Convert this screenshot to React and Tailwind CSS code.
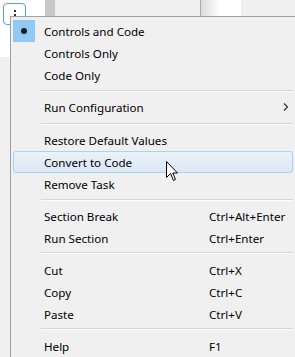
import React from "react";

const font = { fontFamily: '"Noto Sans", "Open Sans", sans-serif' };

function Item({ label, shortcut, checked, hover, submenu }) {
  return (
    <div
      className={`flex h-[22px] items-center rounded-[3px] border ${
        hover ? "border-[#a8d3f1] bg-gradient-to-b from-[#eaf2fa] to-[#dbe8f5]" : "border-transparent"
      }`}
    >
      <div className="flex h-[22px] w-[31px] shrink-0 items-center -ml-px">
        {checked && (
          <div className="flex h-[22px] w-[22px] items-center justify-center bg-[#90c8f6]">
            <div className="h-[6px] w-[6px] rounded-full bg-[#1a1a1a]" />
          </div>
        )}
      </div>
      <div className="w-[165px] shrink-0 whitespace-nowrap pt-px text-[11.6px] leading-[16px] text-black">{label}</div>
      <div className="flex-1 whitespace-nowrap pt-px text-[11.6px] leading-[16px] text-black">{shortcut}</div>
      {submenu && (
        <svg width="6" height="8" viewBox="0 0 6 8" className="mr-[3px]">
          <path d="M1 0.5 L4.5 4 L1 7.5" fill="none" stroke="#333" strokeWidth="1.2" />
        </svg>
      )}
    </div>
  );
}

function Sep({ h = 10, off = 4 }) {
  return (
    <div className="pl-[28px]" style={{ height: h, paddingTop: off }}>
      <div className="h-px bg-[#d7d7d7]" />
      <div className="h-px bg-white/70" />
    </div>
  );
}

export default function App() {
  return (
    <div className="relative h-[357px] w-[295px] overflow-hidden bg-[#f0f0f0]" style={font}>
      {/* background */}
      <div className="flex h-[17px]">
        <div className="w-[45px] bg-white" />
        <div className="w-[10px] bg-[#c8c8c8]" />
        <div className="w-[146px] bg-[#f0f0f0] border-r border-[#a8a8a8]" />
        <div className="flex-1 bg-gradient-to-r from-[#dcdcdc] via-white to-white" style={{ backgroundSize: "40px 100%", backgroundRepeat: "no-repeat" }} />
      </div>
      <div className="h-[40px] w-[10px] bg-white" />

      {/* kebab button */}
      <div className="absolute left-[3px] top-[3px] flex h-[22px] w-[23px] items-start justify-center rounded-[4px] border border-[#5c9ee0] bg-white">
        <div className="mt-[6px] flex flex-col gap-[2px]">
          <div className="h-[2px] w-[2px] bg-[#333]" />
          <div className="h-[2px] w-[2px] bg-[#333]" />
        </div>
      </div>

      {/* menu */}
      <div className="absolute left-[10px] top-[16px] right-0 bottom-[-10px] border-l border-t border-[#a0a0a0] bg-[#f0f0f0] pl-[2px] pr-[2px] pt-[3px]">
        <Item label="Controls and Code" checked />
        <Item label="Controls Only" />
        <Item label="Code Only" />
        <Sep h={10} off={4} />
        <Item label="Run Configuration" submenu />
        <Sep h={11} off={5} />
        <Item label="Restore Default Values" />
        <Item label="Convert to Code" hover />
        <Item label="Remove Task" />
        <Sep h={10} off={4} />
        <Item label="Section Break" shortcut="Ctrl+Alt+Enter" />
        <Item label="Run Section" shortcut="Ctrl+Enter" />
        <Sep h={10} off={3} />
        <Item label="Cut" shortcut="Ctrl+X" />
        <Item label="Copy" shortcut="Ctrl+C" />
        <Item label="Paste" shortcut="Ctrl+V" />
        <Sep h={10} off={3} />
        <Item label="Help" shortcut="F1" />
      </div>

      {/* cursor */}
      <svg className="absolute left-[166px] top-[161px]" width="13" height="21" viewBox="0 0 13 21">
        <path d="M0.5 0.5 L0.5 16.5 L4.5 12.5 L7.5 19.5 L9.5 18.5 L6.8 12 L11.5 12 Z" fill="#fff" stroke="#000" strokeWidth="1" strokeLinejoin="miter" />
      </svg>
    </div>
  );
}
